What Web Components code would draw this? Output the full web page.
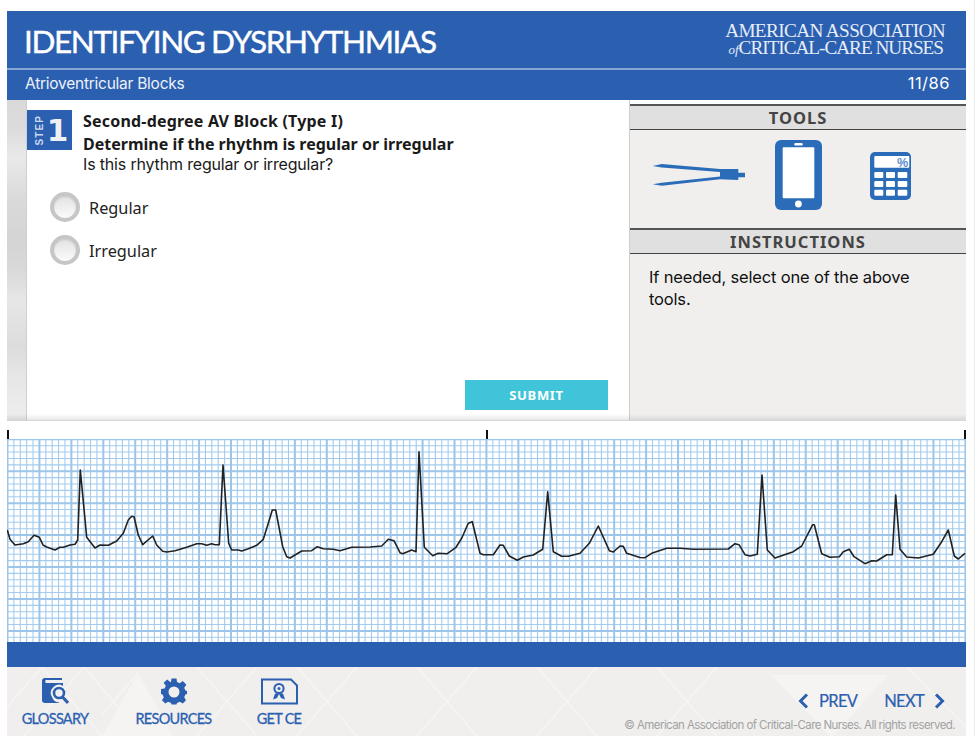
<!DOCTYPE html>
<html>
<head>
<meta charset="utf-8">
<title>Identifying Dysrhythmias</title>
<style>
  html, body { margin: 0; padding: 0; background: #fff; }
  body { box-sizing: border-box; width: 975px; border-right: 1px solid #ececec; padding: 11px 0 0 7px; height: 736px; overflow: hidden; font-family: "Liberation Sans", sans-serif; }
</style>
</head>
<body>
<course-page>
  <course-header slot="header" title-text="IDENTIFYING DYSRHYTHMIAS" section="Atrioventricular Blocks" progress="11/86"></course-header>
  <step-question slot="question" step="1">
    <span slot="case">Second-degree AV Block (Type I)</span>
    <span slot="task">Determine if the rhythm is regular or irregular</span>
    <span slot="prompt">Is this rhythm regular or irregular?</span>
    <radio-option>Regular</radio-option>
    <radio-option>Irregular</radio-option>
  </step-question>
  <tools-panel slot="tools"></tools-panel>
  <ecg-strip slot="strip"></ecg-strip>
  <course-footer slot="footer"></course-footer>
</course-page>

<script>
//page frame
var template_page = document.createElement("template");
template_page.innerHTML = `
<style>
  :host { display: block; width: 959px; }
  .work { display: flex; height: 320px; position: relative; }
  .work::after { content: ""; position: absolute; left: 0; right: 0; bottom: 0; height: 6px; background: linear-gradient(rgba(0,0,0,0), rgba(0,0,0,.09)); }
  .shade {
    width: 19px; border-right: 1px solid #cfcfcf;
    background: linear-gradient(to bottom, #d9d9d9 0, #dcdcdc 30px, #e9e9e9 57px, #dadada 100px, #d4d4d4 140px, #d9d9d9 170px, #e7e7e7 200px, #e0e0e0 230px, #dcdcdc 247px, #e6e6e6 275px, #ececec 310px, #ececec 320px);
  }
  ::slotted([slot=question]) { flex: 1; }
  ::slotted([slot=tools]) { width: 337px; }
</style>
<slot name="header"></slot>
<div class="work">
  <div class="shade"></div>
  <slot name="question"></slot>
  <slot name="tools"></slot>
</div>
<slot name="strip"></slot>
<slot name="footer"></slot>
`;
class CoursePage extends HTMLElement {
  constructor(){
    super();
    this.attachShadow({mode:"open"});
    this.shadowRoot.appendChild(template_page.content.cloneNode(true));
  }
}
customElements.define("course-page", CoursePage);

//blue header with logo
var template_header = document.createElement("template");
template_header.innerHTML = `
<style>
  :host { display: block; background: #2b5fb0; color: #fff; height: 89px; }
  .top { display: flex; justify-content: space-between; align-items: center; height: 57px; padding: 0 21px 0 17px; border-bottom: 2px solid #86a6d8; }
  h1 { margin: 3px 0 0; font: 400 31.5px "Lato", sans-serif; letter-spacing: -1.4px; -webkit-text-stroke: 0.4px #fff; white-space: nowrap; }
  .logo { font-family: "Liberation Serif", serif; font-size: 19.2px; line-height: 17px; margin-top: 1px; color: #e6edf8; letter-spacing: -0.6px; text-align: right; }
  .logo div { white-space: nowrap; }
  .logo .l2 { letter-spacing: -1px; padding-right: 2px; }
  .logo i { font-size: 13px; letter-spacing: 0; }
  .sub { display: flex; justify-content: space-between; align-items: center; height: 26px; padding: 0 16px 4px 18px; font: 400 15.5px "Inter", sans-serif; letter-spacing: -0.25px; color: #edf2fa; }
  .count { letter-spacing: 0.5px; font-size: 16.5px; color: #fff; }
</style>
<div class="top">
  <h1 id="title"></h1>
  <div class="logo"><div>AMERICAN ASSOCIATION</div><div class="l2"><i>of</i>CRITICAL-CARE NURSES</div></div>
</div>
<div class="sub"><span id="section"></span><span class="count" id="count"></span></div>
`;
class CourseHeader extends HTMLElement {
  constructor(){
    super();
    this.attachShadow({mode:"open"});
  }
  connectedCallback(){
    this.shadowRoot.appendChild(template_header.content.cloneNode(true));
    this.shadowRoot.querySelector("#title").textContent = this.getAttribute("title-text");
    this.shadowRoot.querySelector("#section").textContent = this.getAttribute("section");
    this.shadowRoot.querySelector("#count").textContent = this.getAttribute("progress");
  }
}
customElements.define("course-header", CourseHeader);

//question column
var template_question = document.createElement("template");
template_question.innerHTML = `
<style>
  :host { display: flex; flex-direction: column; background: #fff; color: #1a1a1a; padding: 10px 21px 10px 0; box-sizing: border-box; }
  .head { display: flex; gap: 11px; }
  .badge { width: 45px; height: 40px; box-sizing: border-box; padding-left: 3px; background: #2b5fb0; color: #eef1f6; display: flex; align-items: center; justify-content: center; gap: 2px; flex: none; }
  .badge .word { writing-mode: vertical-rl; transform: rotate(180deg); font: 700 10px "Liberation Sans", sans-serif; letter-spacing: 1.1px; color: #c9d8ee; }
  .badge .num { font: 700 31px/40px "DejaVu Sans", sans-serif; }
  .copy { font: 700 16px/22.5px "Noto Sans", sans-serif; letter-spacing: 0; }
  .copy div { white-space: nowrap; }
  .copy .case { letter-spacing: 0.2px; }
  .prompt { font: 400 16px/19px "Inter", sans-serif; letter-spacing: -0.17px; }
  .options { display: flex; flex-direction: column; gap: 13px; margin: 18px 0 0 23px; flex: 1; }
  .foot { display: flex; justify-content: flex-end; }
  button { width: 143px; height: 30px; border: none; background: #3fc4d9; color: #fff; font: 700 13px "Noto Sans", sans-serif; letter-spacing: 0.7px; padding: 0; }
</style>
<div class="head">
  <div class="badge"><span class="word">STEP</span><span class="num" id="num"></span></div>
  <div class="copy">
    <div class="case"><slot name="case"></slot></div>
    <div><slot name="task"></slot></div>
    <div class="prompt"><slot name="prompt"></slot></div>
  </div>
</div>
<div class="options"><slot></slot></div>
<div class="foot"><button>SUBMIT</button></div>
`;
class StepQuestion extends HTMLElement {
  constructor(){
    super();
    this.attachShadow({mode:"open"});
  }
  connectedCallback(){
    this.shadowRoot.appendChild(template_question.content.cloneNode(true));
    this.shadowRoot.querySelector("#num").textContent = this.getAttribute("step");
  }
}
customElements.define("step-question", StepQuestion);

//radio with label
var template_radio = document.createElement("template");
template_radio.innerHTML = `
<style>
  :host { display: flex; align-items: center; gap: 9px; height: 30px; font: 400 16.3px "Noto Sans", sans-serif; color: #222; }
  .dot { width: 22px; height: 22px; border: 4px solid #c6c6c6; border-radius: 50%; background: linear-gradient(#e2e2e2, #fbfbfb); box-shadow: inset 0 1px 2px rgba(0,0,0,.12); }
  .label { margin-top: 2px; }
</style>
<span class="dot"></span><span class="label"><slot></slot></span>
`;
class RadioOption extends HTMLElement {
  constructor(){
    super();
    this.attachShadow({mode:"open"});
    this.shadowRoot.appendChild(template_radio.content.cloneNode(true));
  }
}
customElements.define("radio-option", RadioOption);

//tools + instructions side panel
var template_tools = document.createElement("template");
template_tools.innerHTML = `
<style>
  :host { display: block; background: linear-gradient(#fff 4px, #f0efee 4px); border-left: 1px solid #cfcfcf; box-sizing: border-box; padding-top: 4px; color: #111; }
  h2 { margin: 0; height: 26px; box-sizing: border-box; background: #e0e0e0; border-top: 2px solid #555; border-bottom: 1px solid #444; text-align: center; font: 700 16.5px/23px "Noto Sans", sans-serif; letter-spacing: 1px; color: #444; }
  .icons { display: block; height: 98px; }
  .icons svg { display: block; }
  p { margin: 0; padding: 12px 40px 12px 19px; font: 400 16.5px/22px "Inter", sans-serif; letter-spacing: -0.17px; }
</style>
<h2>TOOLS</h2>
<div class="icons">
  <svg width="336" height="98" viewBox="630 130 336 98">
    <g fill="#2b6cb8">
      <path d="M652.7 166 L661.7 164 L720 169 L738.3 169 L738.3 172.7 L745 172.7 L745 177.3 L738.3 177.3 L738.3 180 L720 179.3 L661.7 185.7 L652.7 184.3 L661.7 182.7 L720 176.5 L720 172 L661.7 167.5 Z"/>
      <rect x="775" y="140" width="47" height="70" rx="6"/>
      <rect x="870" y="152" width="41" height="48" rx="5"/>
    </g>
    <rect x="782.7" y="147.3" width="31.6" height="51" rx="1" fill="#fff"/>
    <rect x="794.3" y="143" width="8.4" height="2.4" rx="1.2" fill="#fff"/>
    <circle cx="798.4" cy="204" r="3.4" fill="#fff"/>
    <rect x="874.3" y="156" width="35" height="11.7" rx="1" fill="#fff"/>
    <g fill="#fff">
      <rect x="874.3" y="172" width="9" height="6" rx="1"/><rect x="886" y="172" width="9" height="6" rx="1"/><rect x="897.7" y="172" width="9.6" height="6" rx="1"/>
      <rect x="874.3" y="181" width="9" height="6" rx="1"/><rect x="886" y="181" width="9" height="6" rx="1"/><rect x="897.7" y="181" width="9.6" height="6" rx="1"/>
      <rect x="874.3" y="189.7" width="9" height="6" rx="1"/><rect x="886" y="189.7" width="9" height="6" rx="1"/><rect x="897.7" y="189.7" width="9.6" height="6" rx="1"/>
    </g>
    <text x="908" y="166.5" text-anchor="end" font-family="Liberation Sans" font-weight="700" font-size="12.5" fill="#5e8fcb">%</text>
  </svg>
</div>
<h2>INSTRUCTIONS</h2>
<p>If needed, select one of the above tools.</p>
`;
class ToolsPanel extends HTMLElement {
  constructor(){
    super();
    this.attachShadow({mode:"open"});
    this.shadowRoot.appendChild(template_tools.content.cloneNode(true));
  }
}
customElements.define("tools-panel", ToolsPanel);

//ecg strip drawn in page coordinates
var ecg_points = "7.3,530 10,539.3 15,545 23.3,543.7 28.3,541.7 34,535.3 39.3,537.3 43.3,545.3 46.7,547 55,550 60,547.3 63.3,547.3 70,545 75,544.3 77.7,540 80.3,470 86.7,537.3 95,548 100,545 108.3,545.3 116.7,541 123.3,533.3 128.3,520 131.7,516.3 134,516.7 138.3,535 142.7,544.7 152.7,536 156.7,545 162.7,551.3 166.7,552 175,550.7 186.7,547.3 196.7,543.7 201.7,543.7 206.7,545.3 211.7,543.7 215,544.7 219.3,544.7 223,465 228.7,543.3 231.7,550 238.3,550 241.7,551 248.3,548.7 256.7,545.3 263.3,539.3 268.3,523.3 272.3,510 275.7,510 282.7,546.7 286.7,556.7 290,558 301.7,551 311.7,550.7 317.3,546.7 323.3,548.7 333.3,549.3 340,550.7 351.7,547.3 370,547 381.7,546 388.3,539.3 394,540.7 400,552.7 402.7,553.7 411.7,550 416,551.7 419,451.7 424.3,547.3 432.7,555.7 438.3,553.3 447.3,553.7 456,547.3 461.7,538.3 468.3,523.3 472.3,521.7 480,553.3 483.3,554.7 493.3,554.7 500,545 503.3,545.3 509.3,556 517.3,560.3 523.3,557 533.3,555 542.7,549.3 547.7,491.7 553.3,551.7 561.7,556.3 568.3,556.3 580,553.3 589.3,543.3 598.3,526 609.3,550.7 613.3,552 620,546 623.3,546.3 626.7,553.3 640,557.5 645,557.7 651.7,553.3 666.7,548.3 680,548.3 693.3,549.3 728.3,549 735,543.7 739,544.7 745,554.7 750,556 757.3,554.3 762,475 767.3,550 775,558 793.3,551.7 801.7,546 812.7,524.7 814.3,524.7 821.7,553.7 830,557.3 839.3,556.7 843.3,551.7 849.3,549.3 854,556.7 865,563.7 871.7,560.7 876.7,561 886.7,554.7 892.3,554.7 895.7,495 900,549.3 906.7,557 918.3,558 933.3,554.3 941.7,541.7 948.3,530 954.3,556 958.3,559 965,553.3";
var template_ecg = document.createElement("template");
template_ecg.innerHTML = `
<style>
  :host { display: block; background: #fff; border-top: 1px solid #d6d6d6; }
  .ticks { display: flex; justify-content: space-between; height: 18px; align-items: flex-end; }
  .ticks b { display: block; width: 2px; height: 9px; background: #111; }
  svg { display: block; }
  .bar { height: 25px; background: #2b5fb0; }
</style>
<div class="ticks"><b></b><b></b><b></b></div>
<svg width="959" height="203" viewBox="7 439 959 203">
  <path id="minor" fill="none" stroke="#a3cbee" stroke-width="1.1"/>
  <path id="major" fill="none" stroke="#9cc5e9" stroke-width="2"/>
  <polyline id="trace" fill="none" stroke="#222" stroke-width="1.6" stroke-linejoin="round"/>
</svg>
<div class="bar"></div>
`;
class EcgStrip extends HTMLElement {
  constructor(){
    super();
    this.attachShadow({mode:"open"});
    this.shadowRoot.appendChild(template_ecg.content.cloneNode(true));
    this.shadowRoot.querySelector("#trace").setAttribute("points", ecg_points);
    this.drawGrid();
  }

  drawGrid(){
    var step = 31.93 / 5, minor = "", major = "";
    for (var i = 0; 7.5 + i * step < 967; i++) {
      var x = (7.5 + i * step).toFixed(2);
      if (i % 5 === 0) major += `M${x} 439V642`; else minor += `M${x} 439V642`;
    }
    for (var j = 0; 439.3 + j * step < 642; j++) {
      var y = (439.3 + j * step).toFixed(2);
      if (j % 5 === 0) major += `M7 ${y}H966`; else minor += `M7 ${y}H966`;
    }
    this.shadowRoot.querySelector("#minor").setAttribute("d", minor);
    this.shadowRoot.querySelector("#major").setAttribute("d", major);
  }
}
customElements.define("ecg-strip", EcgStrip);

//footer
var template_footer = document.createElement("template");
template_footer.innerHTML = `
<style>
  :host { display: block; position: relative; height: 69px; background: #f0efee; overflow: hidden; color: #2b5fb0; font-family: "Lato", sans-serif; }
  .bg { position: absolute; left: 0; top: 0; }
  .row { position: relative; display: flex; justify-content: space-between; height: 69px; }
  nav { display: flex; }
  a { display: flex; flex-direction: column; align-items: center; font-size: 14.5px; letter-spacing: -0.72px; -webkit-text-stroke: 0.3px #2b5fb0; padding-top: 11px; box-sizing: border-box; }
  a svg { display: block; height: 27px; }
  a span { margin-top: 5px; }
  a.one { width: 96px; }
  a.two { width: 141px; }
  a.three { width: 70px; }
  .right { display: flex; flex-direction: column; align-items: flex-end; padding: 24px 11px 0 0; }
  .pager { display: flex; align-items: center; gap: 27px; padding-right: 10px; font-size: 16.5px; letter-spacing: -0.7px; -webkit-text-stroke: 0.2px #2b5fb0; }
  .pager span { display: flex; align-items: center; gap: 10px; }
  .legal { margin-top: 7px; font: 400 11.5px "Inter", sans-serif; letter-spacing: -0.57px; color: #a2a2a2; white-space: nowrap; }
</style>
<svg class="bg" width="959" height="69" viewBox="0 0 959 69">
  <g fill="none" stroke="#f6f5f4" stroke-width="1.5">
    <path d="M0 40 L35 0 L95 69 M17 69 L77 0 L136 69 M131 6 L95 48 M190 0 L250 69 M250 0 L190 69 M290 0 L350 69 M350 0 L290 69 M410 0 L470 69 M470 0 L410 69 M530 0 L590 69 M590 0 L530 69 M650 0 L710 69 M710 0 L650 69 M765 8 L825 69 M880 8 L825 69 M900 0 L959 60"/>
  </g>
  <path d="M131 6 L166 69 H95 Z" fill="#f5f4f3"/>
  <path d="M766 8 H880 L823 69 Z" fill="#f5f4f3"/>
</svg>
<div class="row">
  <nav>
    <a class="one">
      <svg width="27" height="27" viewBox="0 0 27 27"><path d="M2 0 H20 V2 H4 A2 2 0 0 0 4 5 H21 V8 A8 8 0 0 0 10 19 A8 8 0 0 0 17 24.5 V25 H3 A3 3 0 0 1 0 22 V3 A3 3 0 0 1 2 0 Z" fill="#2b5fb0"/><circle cx="17" cy="15" r="5" fill="none" stroke="#2b5fb0" stroke-width="2.6"/><path d="M20.5 19 L26 25" stroke="#2b5fb0" stroke-width="3"/></svg>
      <span>GLOSSARY</span>
    </a>
    <a class="two">
      <svg width="26" height="27" viewBox="0 0 26 26"><path fill-rule="evenodd" fill="#2b5fb0" d="M10.5 0 H15.5 L16 3.6 L18.8 4.8 L21.8 2.6 L25.4 6.2 L23.2 9.2 L24.4 12 L26 12.5 V15.5 L24.4 16 L23.2 18.8 L25 21.8 L21.8 25 L18.8 23.2 L16 24.4 L15.5 26 H10.5 L10 24.4 L7.2 23.2 L4.2 25 L1 21.8 L2.8 18.8 L1.6 16 L0 15.5 V10.5 L3.6 10 L4.8 7.2 L2.6 4.2 L6.2 1 L9.2 3.6 L10 3.6 Z M13 8 A5.5 5.5 0 1 0 13 19 A5.5 5.5 0 1 0 13 8 Z"/></svg>
      <span>RESOURCES</span>
    </a>
    <a class="three">
      <svg width="37" height="26" viewBox="0 0 37 26"><path d="M1 1 H30 L36 7 V25 H1 Z" fill="none" stroke="#2b5fb0" stroke-width="2"/><circle cx="18" cy="10" r="4.6" fill="none" stroke="#2b5fb0" stroke-width="2"/><circle cx="18" cy="10" r="1.5" fill="#2b5fb0"/><path d="M14 15 L12 21 L16 19.5 L18 15.5 L20 19.5 L24 21 L22 15 Z" fill="#2b5fb0"/></svg>
      <span>GET CE</span>
    </a>
  </nav>
  <div class="right">
    <div class="pager">
      <span><svg width="11" height="16" viewBox="0 0 11 16"><path d="M9 1.5 L2.5 8 L9 14.5" fill="none" stroke="#2b5fb0" stroke-width="3"/></svg>PREV</span>
      <span>NEXT<svg width="11" height="16" viewBox="0 0 11 16"><path d="M2 1.5 L8.5 8 L2 14.5" fill="none" stroke="#2b5fb0" stroke-width="3"/></svg></span>
    </div>
    <div class="legal">© American Association of Critical-Care Nurses. All rights reserved.</div>
  </div>
</div>
`;
class CourseFooter extends HTMLElement {
  constructor(){
    super();
    this.attachShadow({mode:"open"});
    this.shadowRoot.appendChild(template_footer.content.cloneNode(true));
  }
}
customElements.define("course-footer", CourseFooter);
</script>
</body>
</html>
